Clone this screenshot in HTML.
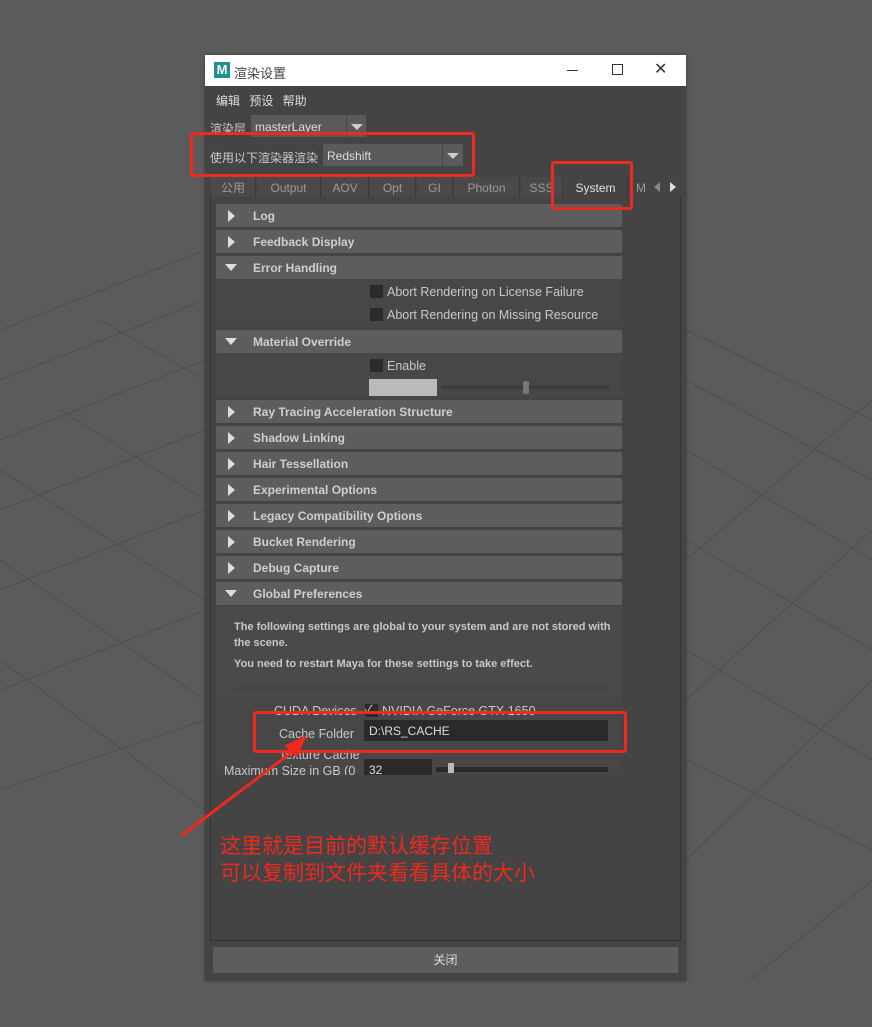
<!DOCTYPE html>
<html><head><meta charset="utf-8"><style>
*{margin:0;padding:0;box-sizing:border-box}
body{width:872px;height:1027px;background:#5b5b5b;position:relative;overflow:hidden;font-family:"Liberation Sans","Noto Sans CJK SC",sans-serif;color:#c8c8c8;font-size:12px}
.abs{position:absolute}
#win{left:205px;top:55px;width:481px;height:926px;background:#444;box-shadow:0 0 3px rgba(0,0,0,.4)}
#title{left:0;top:0;width:481px;height:31px;background:#fff;color:#444;font-size:13px}
.hdr{left:11px;width:406px;height:23px;background:#5d5d5d;border-radius:2px;font-weight:bold;font-size:12px;color:#cfcfcf;line-height:25px;padding-left:37px}
.cnt{left:11px;width:406px;background:#474747}
.tri-r{position:absolute;left:12px;top:6px;width:0;height:0;border-top:6px solid transparent;border-bottom:6px solid transparent;border-left:7px solid #ddd}
.tri-d{position:absolute;left:9px;top:8px;width:0;height:0;border-left:6px solid transparent;border-right:6px solid transparent;border-top:7px solid #ddd}
.cb{position:absolute;width:13px;height:13px;background:#2b2b2b}
.tab{top:122px;height:20px;background:#4a4a4a;color:#999;font-size:12px;text-align:center;line-height:22px;border-right:1px solid #3a3a3a}
.red{position:absolute;border:3px solid #f0281e;border-radius:3px}
</style></head><body>
<svg class="abs" style="left:0;top:0" width="872" height="1027">
<g stroke="#4e4e4e" stroke-width="1" fill="none">
<path d="M0 330 L205 250 M0 380 L205 300 M0 440 L205 360 M0 510 L205 430 M0 590 L205 510 M0 690 L205 610 M0 790 L205 720"/>
<path d="M0 470 L205 600 M0 560 L205 700 M0 660 L205 810 M60 410 L205 500 M100 320 L205 380"/>
<path d="M686 330 L872 420 M686 380 L872 480 M686 450 L872 560 M686 540 L872 650 M686 650 L872 760 M686 760 L872 850"/>
<path d="M686 560 L872 400 M686 700 L872 530 M686 860 L872 680 M750 980 L872 880"/>
</g></svg>
<div id="win" class="abs">
 <div id="title" class="abs">
  <div class="abs" style="left:9px;top:7px;width:16px;height:16px;background:#1e8f92;color:#fff;font-weight:bold;font-size:13px;line-height:16px;text-align:center">M</div>
  <div class="abs" style="left:29px;top:8px">渲染设置</div>
  <div class="abs" style="left:362px;top:15px;width:11px;height:1px;background:#333"></div>
  <div class="abs" style="left:407px;top:9px;width:11px;height:11px;border:1px solid #333"></div>
  <div class="abs" style="left:449px;top:4px;font-size:16px;color:#333">✕</div>
 </div>
 <div class="abs" style="left:11px;top:37px;font-size:12px;color:#ddd;word-spacing:6px">编辑 预设 帮助</div>
 <div class="abs" style="left:5px;top:65px;color:#ccc">渲染层</div>
 <div class="abs" style="left:46px;top:60px;width:95px;height:22px;background:#5a5a5a;padding-left:4px;line-height:24px;color:#ddd">masterLayer</div>
 <div class="abs" style="left:142px;top:60px;width:19px;height:22px;background:#5a5a5a"><div class="abs" style="left:4px;top:9px;border-left:6px solid transparent;border-right:6px solid transparent;border-top:6px solid #ccc"></div></div>
 <div class="abs" style="left:5px;top:94px;color:#ccc">使用以下渲染器渲染</div>
 <div class="abs" style="left:118px;top:89px;width:119px;height:22px;background:#5a5a5a;padding-left:4px;line-height:24px;color:#ddd">Redshift</div>
 <div class="abs" style="left:238px;top:89px;width:20px;height:22px;background:#5a5a5a"><div class="abs" style="left:4px;top:9px;border-left:6px solid transparent;border-right:6px solid transparent;border-top:6px solid #ccc"></div></div>
 <div class="abs tab" style="left:6px;width:45px">公用</div>
 <div class="abs tab" style="left:52px;width:64px">Output</div>
 <div class="abs tab" style="left:117px;width:47px">AOV</div>
 <div class="abs tab" style="left:165px;width:46px">Opt</div>
 <div class="abs tab" style="left:212px;width:36px">GI</div>
 <div class="abs tab" style="left:249px;width:66px">Photon</div>
 <div class="abs tab" style="left:316px;width:42px">SSS</div>
 <div class="abs tab" style="left:359px;width:64px;background:#444;color:#e0e0e0;top:121px;height:22px;line-height:24px">System</div>
 <div class="abs" style="left:431px;top:126px;color:#999">M</div>
 <div class="abs" style="left:449px;top:127px;border-top:5px solid transparent;border-bottom:5px solid transparent;border-right:6px solid #888"></div>
 <div class="abs" style="left:465px;top:127px;border-top:5px solid transparent;border-bottom:5px solid transparent;border-left:6px solid #ddd"></div>
 <div class="abs" style="left:5px;top:142px;width:471px;height:744px;border:1px solid #333;border-top:none;background:#444">
  <div class="abs hdr" style="top:7px;left:5px"><span class="tri-r"></span>Log</div>
  <div class="abs hdr" style="top:33px;left:5px"><span class="tri-r"></span>Feedback Display</div>
  <div class="abs hdr" style="top:59px;left:5px"><span class="tri-d"></span>Error Handling</div>
  <div class="abs cnt" style="top:82px;left:5px;height:48px">
   <span class="cb" style="left:154px;top:6px"></span><div class="abs" style="left:171px;top:6px;font-size:12.5px">Abort Rendering on License Failure</div>
   <span class="cb" style="left:154px;top:29px"></span><div class="abs" style="left:171px;top:29px;font-size:12.5px">Abort Rendering on Missing Resource</div>
  </div>
  <div class="abs hdr" style="top:133px;left:5px"><span class="tri-d"></span>Material Override</div>
  <div class="abs cnt" style="top:156px;left:5px;height:44px">
   <span class="cb" style="left:154px;top:6px"></span><div class="abs" style="left:171px;top:6px;font-size:12.5px">Enable</div>
   <div class="abs" style="left:153px;top:26px;width:68px;height:17px;background:#bababa"></div>
   <div class="abs" style="left:225px;top:32px;width:169px;height:4px;background:#3c3c3c;border-radius:2px"></div>
   <div class="abs" style="left:307px;top:28px;width:6px;height:13px;background:#777;border-radius:2px"></div>
  </div>
  <div class="abs hdr" style="top:203px;left:5px"><span class="tri-r"></span>Ray Tracing Acceleration Structure</div>
  <div class="abs hdr" style="top:229px;left:5px"><span class="tri-r"></span>Shadow Linking</div>
  <div class="abs hdr" style="top:255px;left:5px"><span class="tri-r"></span>Hair Tessellation</div>
  <div class="abs hdr" style="top:281px;left:5px"><span class="tri-r"></span>Experimental Options</div>
  <div class="abs hdr" style="top:307px;left:5px"><span class="tri-r"></span>Legacy Compatibility Options</div>
  <div class="abs hdr" style="top:333px;left:5px"><span class="tri-r"></span>Bucket Rendering</div>
  <div class="abs hdr" style="top:359px;left:5px"><span class="tri-r"></span>Debug Capture</div>
  <div class="abs hdr" style="top:385px;left:5px"><span class="tri-d"></span>Global Preferences</div>
  <div class="abs cnt" style="top:410px;left:5px;height:90px;background:#4a4a4a">
   <div class="abs" style="left:18px;top:12px;font-size:11px;font-weight:bold;line-height:16px;width:380px">The following settings are global to your system and are not stored with the scene.</div>
   <div class="abs" style="left:18px;top:51px;font-size:11px;font-weight:bold">You need to restart Maya for these settings to take effect.</div>
   <div class="abs" style="left:18px;top:80px;width:375px;height:4px;background:#444"></div>
  </div>
  <div class="abs" style="left:5px;top:500px;width:406px;height:78px;background:#474747;overflow:hidden">
   <div class="abs" style="left:58px;top:7px;font-size:12.5px">CUDA Devices</div>
   <span class="cb" style="left:149px;top:7px;color:#ddd;font-size:11px;line-height:13px">✓</span>
   <div class="abs" style="left:166px;top:7px;font-size:12.5px">NVIDIA GeForce GTX 1650</div>
   <div class="abs" style="left:63px;top:30px;font-size:12.5px">Cache Folder</div>
   <div class="abs" style="left:148px;top:23px;width:244px;height:21px;background:#2a2a2a;color:#ddd;padding-left:5px;line-height:23px;font-size:12px">D:\RS_CACHE</div>
   <div class="abs" style="left:63px;top:51px;font-size:12.5px">Texture Cache</div>
   <div class="abs" style="left:8px;top:67px;font-size:12.5px">Maximum Size in GB (0</div>
   <div class="abs" style="left:148px;top:62px;width:68px;height:21px;background:#2a2a2a;color:#ddd;padding-left:5px;line-height:23px">32</div>
   <div class="abs" style="left:220px;top:70px;width:172px;height:5px;background:#2a2a2a"></div>
   <div class="abs" style="left:232px;top:66px;width:6px;height:10px;background:#bbb"></div>
  </div>
 </div>
 <div class="abs" style="left:8px;top:892px;width:465px;height:26px;background:#5d5d5d;text-align:center;line-height:27px;color:#ddd">关闭</div>
</div>
<div class="red" style="left:190px;top:132px;width:285px;height:45px"></div>
<div class="red" style="left:551px;top:161px;width:82px;height:49px"></div>
<div class="red" style="left:253px;top:711px;width:374px;height:42px"></div>
<svg class="abs" style="left:0;top:0" width="872" height="1027"><path d="M181 836 L292 752 L287 746 L304 738 L296 755 L292 752" fill="#f0281e" stroke="#f0281e" stroke-width="3"/></svg>
<div class="abs" style="left:220px;top:833px;color:#f0281e;font-size:21px;line-height:27px;font-family:'Liberation Sans','Noto Sans CJK SC',sans-serif">这里就是目前的默认缓存位置<br>可以复制到文件夹看看具体的大小</div>
</body></html>
